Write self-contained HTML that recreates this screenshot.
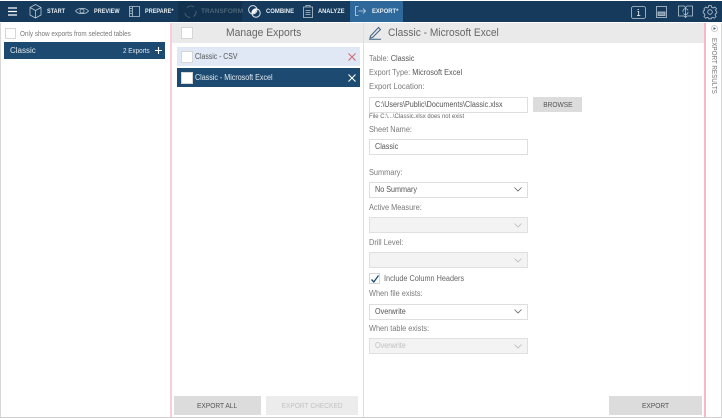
<!DOCTYPE html>
<html><head><meta charset="utf-8"><style>
html,body{margin:0;padding:0;width:722px;height:418px;overflow:hidden;background:#fff}
body{position:relative;font-family:"Liberation Sans",sans-serif;color:#555}
.a{position:absolute;white-space:nowrap;transform-origin:0 50%}
.nav{font-size:6.6px;font-weight:bold;color:#e8eef3;top:8px;line-height:8px;transform:scaleX(.84)}
.l{font-size:8px;color:#7a7a7a;left:369px;line-height:10px;transform:scaleX(.92)}
.box{position:absolute;left:369px;width:157px;height:14px;background:#fff;border:1px solid #dedede;}
.t{position:absolute;left:375px;font-size:8px;line-height:14px;color:#555;white-space:nowrap;transform-origin:0 50%;transform:scaleX(.9)}
.dis{background:#f3f3f3;border-color:#e0e0e0}
.btn{position:absolute;background:#dcdcdc;font-size:7.600px;color:#555;text-align:center}
.btn span{display:inline-block;transform:scaleX(.87)}
.cb{position:absolute;background:#fff;border:1px solid #d6d6d6;box-sizing:border-box}
svg{position:absolute;overflow:visible}
</style></head><body>
<div class="a" style="left:0;top:1px;width:722px;height:21px;background:#153a5b"></div>
<div class="a" style="left:178px;top:1px;width:64px;height:21px;background:#12314e"></div>
<div class="a" style="left:350px;top:1px;width:53px;height:21px;background:#2f689a"></div>

<svg style="left:8px;top:7px" width="10" height="9" stroke="#fff" stroke-width="1.300"><path d="M0 1H9M0 4.500H9M0 8H9"/></svg>
<svg style="left:29px;top:4px" width="13" height="15" fill="none" stroke="#b9c8d5" stroke-width=".8"><path d="M6.500 .5L12 3.500V11L6.500 14L1 11V3.500ZM1 3.500L6.500 6.500L12 3.500M6.500 6.500V14"/></svg>
<div class="a nav" style="left:47px">START</div>
<svg style="left:75px;top:7px" width="14" height="8" fill="none" stroke="#b9c8d5" stroke-width=".8"><path d="M.5 4C3 .5 11 .5 13.500 4C11 7.500 3 7.500 .5 4Z"/><circle cx="7" cy="4" r="2"/></svg>
<div class="a nav" style="left:94px">PREVIEW</div>
<svg style="left:129px;top:6px" width="11" height="11" fill="none" stroke="#b9c8d5" stroke-width=".8"><path d="M.5 .5H10.500V10.500H.5ZM3.500 .5V10.500"/><path d="M1 2.500H3M1 5H3M1 7.500H3"/></svg>
<div class="a nav" style="left:145px">PREPARE*</div>
<svg style="left:184px;top:5px" width="13" height="13" fill="none" stroke="#4c6478" stroke-width=".9"><path d="M3 2.500A6 6 0 0 1 10 2M12 6A6 6 0 0 1 9.500 11.500M6 12.500A6 6 0 0 1 .8 8"/></svg>
<div class="a nav" style="left:201px;color:#4c6478;transform:scaleX(1)">TRANSFORM</div>
<svg style="left:248px;top:5px" width="13" height="13" fill="none" stroke="#dfe6ec" stroke-width="1"><circle cx="4.800" cy="4.800" r="4.200"/><circle cx="8" cy="8" r="4.200"/><path d="M8.500 4A4.200 4.200 0 0 1 4 8.500A4.200 4.200 0 0 1 8.500 4Z" fill="#fff" stroke="none"/></svg>
<div class="a nav" style="left:266px;transform:scaleX(.9)">COMBINE</div>
<svg style="left:303px;top:5px" width="10" height="13" fill="none" stroke="#b9c8d5" stroke-width=".8"><path d="M.5 2H9.500V12.500H.5ZM3 2V.5H7V2M2.500 5.500H7.500M2.500 7.500H7.500M2.500 9.500H7.500"/></svg>
<div class="a nav" style="left:318px;transform:scaleX(.87)">ANALYZE</div>
<svg style="left:355px;top:6px" width="11" height="10" fill="none" stroke="#c8d6e2" stroke-width=".8"><path d="M3.500 .5H.5V9.500H3.500M3.500 5H10.500M8 2.500L10.500 5L8 7.500"/></svg>
<div class="a nav" style="left:372px;font-size:6.300px;transform:scaleX(.93)">EXPORT*</div>

<svg style="left:631px;top:6px" width="14" height="13" fill="none" stroke="#b9c8d5" stroke-width=".8"><rect x=".5" y=".5" width="14" height="12" rx="2"/><path d="M6.500 3.500H8M6.500 5.500H7.700V9.500M6 9.500H9.300" stroke="#fff"/></svg>
<svg style="left:656px;top:6px" width="11" height="12" fill="none" stroke="#b9c8d5" stroke-width=".8"><rect x=".5" y=".5" width="10" height="11"/><rect x="2" y="6" width="7" height="3.500" fill="#b9c8d5" fill-opacity=".6"/></svg>
<svg style="left:678px;top:4px" width="15" height="15" fill="none" stroke="#b9c8d5" stroke-width=".8"><path d="M.5 2H6L7.500 3.500L9 2H14.500V12H9L7.500 13.500L6 12H.5Z"/><path d="M7.500 3.500V13M5 8A2.500 2.500 0 0 1 10 6.500M10 8A2.500 2.500 0 0 1 5.500 9.500"/></svg>
<svg style="left:703px;top:5px" width="14" height="14" fill="none" stroke="#b9c8d5" stroke-width=".8"><circle cx="7" cy="7" r="2.300"/><path d="M5.800 .5H8.200L8.600 2.300L10.200 3L11.800 2L13.500 3.700L12.500 5.300L13.200 6L13.800 7V8L12.500 8.700L12 10L13 11.600L11.300 13.300L9.700 12.300L8.500 12.800L8.200 13.800H5.800L5.500 12.800L4.300 12.300L2.700 13.300L1 11.600L2 10L1.500 8.700L.2 8V6L1.500 5.300L1 3.700L2.700 2L4.300 3L5.400 2.300Z"/></svg>

<div class="a" style="left:170px;top:23px;width:2px;height:394px;background:#fbccd9"></div>
<div class="a" style="left:704px;top:23px;width:2px;height:394px;background:#f9b8c9"></div>
<div class="a" style="left:363px;top:23px;width:1px;height:394px;background:#dedede"></div>
<div class="a" style="left:0;top:23px;width:1px;height:395px;background:#d8d8d8"></div>
<div class="a" style="left:721px;top:23px;width:1px;height:395px;background:#d8d8d8"></div>
<div class="a" style="left:0;top:417px;width:722px;height:1px;background:#cfcfcf"></div>

<div class="cb" style="left:5px;top:28px;width:11px;height:11px"></div>
<div class="a" style="left:20px;top:29px;font-size:7.300px;line-height:9px;color:#777;transform:scaleX(.87)">Only show exports from selected tables</div>
<div class="a" style="left:4px;top:42px;width:161px;height:17px;background:#1d4a70"></div>
<div class="a" style="left:10px;top:46px;font-size:8px;line-height:10px;color:#dfe8ef">Classic</div>
<div class="a" style="left:123px;top:46px;font-size:7.200px;line-height:9px;color:#dfe8ef;transform:scaleX(.88)">2 Exports</div>
<svg style="left:154px;top:46px" width="9" height="9" stroke="#fff" stroke-width="1.100"><path d="M4.500 1V8M1 4.500H8"/></svg>

<div class="a" style="left:172px;top:23px;width:191px;height:20px;background:#eaeaea"></div>
<div class="cb" style="left:181px;top:27px;width:12px;height:12px"></div>
<div class="a" style="left:226px;top:25.500px;font-size:11px;line-height:14px;color:#666;transform:scaleX(.94)">Manage Exports</div>
<div class="a" style="left:177px;top:47px;width:183px;height:19px;background:#dfe8f4"></div>
<div class="cb" style="left:181px;top:51px;width:12px;height:12px"></div>
<div class="a" style="left:195px;top:52px;font-size:8px;line-height:10px;color:#555;transform:scaleX(.86)">Classic - CSV</div>
<svg style="left:348px;top:53px" width="8" height="8" stroke="#d06a70" stroke-width="1.100"><path d="M.5 .5L7.500 7.500M7.500 .5L.5 7.500"/></svg>
<div class="a" style="left:177px;top:68px;width:183px;height:19px;background:#1d4a70"></div>
<div class="cb" style="left:181px;top:72px;width:12px;height:12px"></div>
<div class="a" style="left:195px;top:73px;font-size:8px;line-height:10px;color:#e6edf3;transform:scaleX(.89)">Classic - Microsoft Excel</div>
<svg style="left:348px;top:74px" width="8" height="8" stroke="#fff" stroke-width="1.100"><path d="M.5 .5L7.500 7.500M7.500 .5L.5 7.500"/></svg>

<div class="btn" style="left:174px;top:396px;width:87px;height:19px;line-height:19px"><span>EXPORT ALL</span></div>
<div class="btn" style="left:266px;top:396px;width:92px;height:19px;line-height:19px;background:#ececec;color:#c2c2c2"><span>EXPORT CHECKED</span></div>

<div class="a" style="left:364px;top:23px;width:340px;height:20px;background:#eaeaea"></div>
<svg style="left:369px;top:26px" width="13" height="14" fill="none" stroke="#3d5f80" stroke-width="1"><path d="M1.500 10L9.500 1.500L11.500 3.500L3.500 11.500L1 12ZM0 13.200H12"/></svg>
<div class="a" style="left:388px;top:25.500px;font-size:11px;line-height:14px;color:#666;transform:scaleX(.925)">Classic - Microsoft Excel</div>

<div class="a l" style="top:53.600px">Table: <span style="color:#555">Classic</span></div>
<div class="a l" style="top:67.600px">Export Type: <span style="color:#555">Microsoft Excel</span></div>
<div class="a l" style="top:81.600px;transform:scaleX(.96)">Export Location:</div>
<div class="box" style="top:97px"></div><div class="t" style="top:98px">C:\Users\Public\Documents\Classic.xlsx</div>
<div class="btn" style="left:533px;top:97px;width:49px;height:15px;line-height:15px"><span>BROWSE</span></div>
<div class="a" style="left:369px;top:111.600px;font-size:6.600px;line-height:9px;color:#666;transform:scaleX(.905)">File C:\...\Classic.xlsx does not exist</div>
<div class="a l" style="top:124.600px">Sheet Name:</div>
<div class="box" style="top:139px"></div><div class="t" style="top:140px">Classic</div>
<div class="a l" style="top:167.600px">Summary:</div>
<div class="box" style="top:182px"></div><div class="t" style="top:183px">No Summary</div>
<svg style="left:514px;top:187px" width="8" height="5" fill="none" stroke="#666" stroke-width=".8"><path d="M.5 .5L4 4L7.500 .5"/></svg>
<div class="a l" style="top:202.600px">Active Measure:</div>
<div class="box dis" style="top:217px"></div>
<svg style="left:514px;top:223px" width="8" height="5" fill="none" stroke="#bbb" stroke-width=".8"><path d="M.5 .5L4 4L7.500 .5"/></svg>
<div class="a l" style="top:237.600px">Drill Level:</div>
<div class="box dis" style="top:252px"></div>
<svg style="left:514px;top:258px" width="8" height="5" fill="none" stroke="#bbb" stroke-width=".8"><path d="M.5 .5L4 4L7.500 .5"/></svg>
<div class="cb" style="left:369px;top:273px;width:11px;height:11px"></div>
<svg style="left:371px;top:275px" width="8" height="8" fill="none" stroke="#1d4a70" stroke-width="1.300"><path d="M.5 4.500L2.800 7L7.500 .5"/></svg>
<div class="a" style="left:384px;top:274px;font-size:8px;line-height:10px;color:#666;transform:scaleX(.91)">Include Column Headers</div>
<div class="a l" style="top:288.600px">When file exists:</div>
<div class="box" style="top:304px"></div><div class="t" style="top:305px">Overwrite</div>
<svg style="left:514px;top:309px" width="8" height="5" fill="none" stroke="#666" stroke-width=".8"><path d="M.5 .5L4 4L7.500 .5"/></svg>
<div class="a l" style="top:323.600px">When table exists:</div>
<div class="box dis" style="top:338px"></div><div class="t" style="top:339px;color:#c0c0c0">Overwrite</div>
<svg style="left:514px;top:344px" width="8" height="5" fill="none" stroke="#bbb" stroke-width=".8"><path d="M.5 .5L4 4L7.500 .5"/></svg>
<div class="btn" style="left:609px;top:396px;width:93px;height:19px;line-height:19px"><span>EXPORT</span></div>

<svg style="left:711px;top:25px" width="7" height="7" fill="none"><circle cx="3.500" cy="3.500" r="3" stroke="#bbb" stroke-width=".7"/><path d="M2.500 2L5 3.500L2.500 5Z" fill="#3d5f80"/></svg>
<div class="a" style="left:710px;top:38px;font-size:7.400px;line-height:9px;color:#777;writing-mode:vertical-rl;transform-origin:50% 0;transform:scaleY(.85)">EXPORT RESULTS</div>
</body></html>
